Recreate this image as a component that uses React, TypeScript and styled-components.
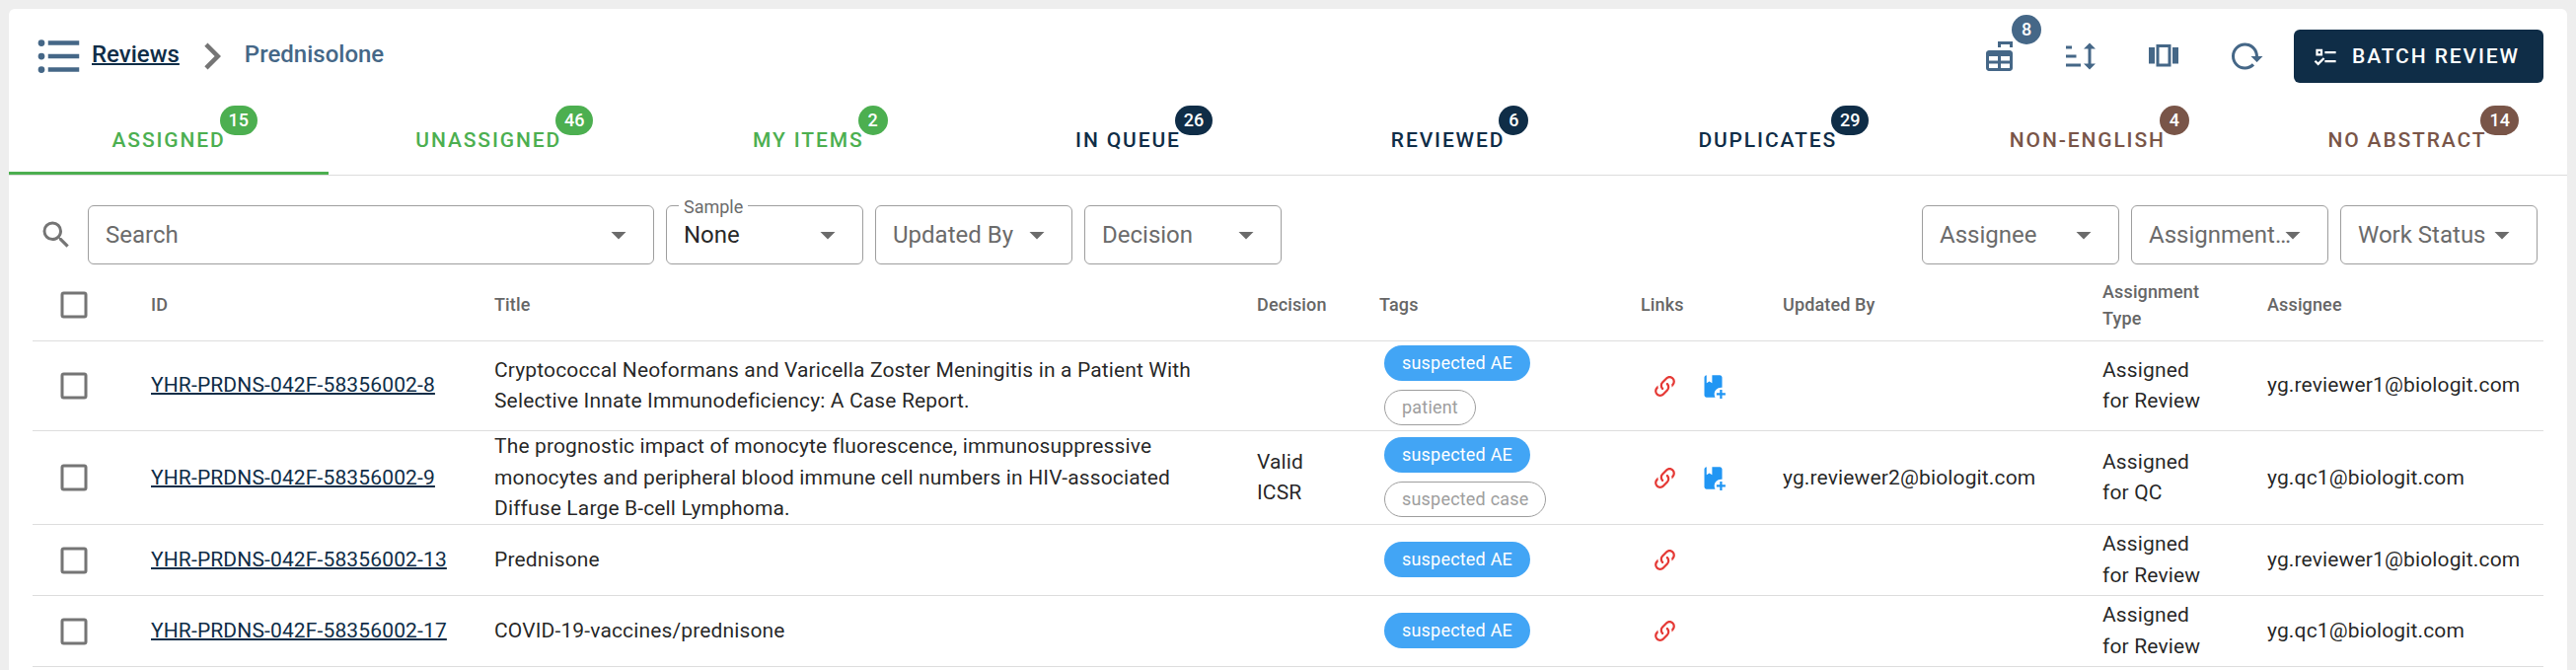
import React from 'react';
import styled, { createGlobalStyle } from 'styled-components';

const Global = createGlobalStyle`
  * { box-sizing: border-box; }
  html, body { margin: 0; height: 679px; overflow: hidden; background: #eeeeee; }
  body { font-family: Roboto, "Liberation Sans", sans-serif; color: rgba(0,0,0,.87); }
`;

const Page = styled.div`
  height: 679px; padding: 9px 9px 0; background: #eeeeee; overflow: hidden;
`;
const Card = styled.main`
  height: 700px; background: #fff; border-radius: 6px; overflow: hidden;
`;
const Header = styled.header`
  height: 96px; display: flex; align-items: center; justify-content: space-between; padding: 0 24px;
`;
const Crumbs = styled.nav`
  display: flex; align-items: center; font-size: 24px; font-weight: 500; color: #456787; line-height: 36px;
`;
const CrumbLink = styled.a`
  color: #0f2d47; text-decoration: underline; text-decoration-thickness: 2px; margin: 0 0 5px 6px;
`;
const Current = styled.span`margin-bottom: 5px;`;
const Icon = styled.svg<{ $size?: number }>`
  width: ${p => p.$size ?? 36}px; height: ${p => p.$size ?? 36}px; fill: currentColor; display: block; flex: none;
`;
const Chevron = styled(Icon)`color: #757575; margin: 0 6px;`;
const Actions = styled.div`display: flex; align-items: center; color: #456787;`;
const ActionIcon = styled.div`
  position: relative; width: 36px; height: 36px; margin-right: 48px;
  &:nth-of-type(1) { margin-right: 45px; }
  &:nth-of-type(4) { margin-right: 30px; }
`;
const Badge = styled.span<{ $color: string }>`
  position: absolute; left: calc(100% - 7px); bottom: calc(100% - 6px); height: 30px; min-width: 30px;
  padding: 6px 9px; border-radius: 15px; background: ${p => p.$color}; color: #fff;
  font-size: 18px; line-height: 18px; font-weight: 500; letter-spacing: 0; text-align: center;
`;
const Batch = styled.button`
  height: 54px; width: 253px; border: 0; border-radius: 6px; background: #0f2d47; color: #fff; padding: 0 0 0 19px;
  display: flex; align-items: center; gap: 13px; white-space: nowrap;
  font: 500 21px Roboto, sans-serif; letter-spacing: 1.9px;
`;
const Tabs = styled.div`
  height: 73px; display: flex; border-bottom: 1px solid #dcdcdc;
`;
const Tab = styled.div<{ $color: string; $active?: boolean }>`
  flex: 1; display: flex; align-items: center; justify-content: center; color: ${p => p.$color};
  font-size: 21px; line-height: 24px; font-weight: 500; letter-spacing: 1.875px; padding-top: 2px;
  box-shadow: ${p => (p.$active ? `inset 0 -3px ${p.$color}` : 'none')};
`;
const TabLabel = styled.span`position: relative; white-space: nowrap;`;
const TabBadge = styled(Badge)`left: calc(100% - 6px); bottom: calc(100% - 7px);`;
const Filters = styled.div`
  height: 96px; display: flex; align-items: center; padding: 24px 30px 0; color: #757575;
`;
const SearchIcon = styled(Icon)`margin-right: 14px;`;
const Select = styled.div<{ $w: number }>`
  position: relative; width: ${p => p.$w}px; height: 60px; border: 1px solid #9e9e9e; border-radius: 6px;
  display: flex; align-items: center; padding: 0 17px 0 17px; margin-right: 12px;
  font-size: 24px; color: #6b6b6b;
  &:last-child { margin-right: 0; }
`;
const SelectText = styled.span<{ $dark?: boolean }>`
  flex: 1; min-width: 0; white-space: nowrap; color: ${p => (p.$dark ? 'rgba(0,0,0,.87)' : 'inherit')};
`;
const FloatLabel = styled.span`
  position: absolute; top: -10px; left: 12px; padding: 0 5px; background: #fff; font-size: 18px; line-height: 22px;
`;
const Arrow = styled(Icon)`color: #6b6b6b;`;
const Spacer = styled.div`flex: 1;`;
const Table = styled.div`margin: 0 24px;`;
const Row = styled.div<{ $h: number }>`
  height: ${p => p.$h}px; display: grid; align-items: center; border-bottom: 1px solid #dddddd;
  grid-template-columns: 120px 348px 773px 124px 265px 144px 324px 167px 1fr;
  font-size: 21px; line-height: 31.5px; letter-spacing: 0.14px;
`;
const HeadRow = styled(Row)`
  padding-bottom: 2px; font-size: 18px; line-height: 27px; font-weight: 500; color: #666;
`;
const Cell = styled.div`white-space: pre;`;
const CheckCell = styled.div`padding-left: 24px; color: #757575;`;
const IdLink = styled.a`color: #0f2d47; text-decoration: underline; text-decoration-thickness: 2px;`;
const Tags = styled.div`
  display: flex; flex-direction: column; align-items: flex-start; gap: 9px; padding: 0 0 1px 5px;
`;
const Tag = styled.span<{ $outline?: boolean }>`
  height: 36px; padding: 0 ${p => (p.$outline ? 17 : 18)}px; border-radius: 18px;
  font-size: 18px; line-height: ${p => (p.$outline ? 34 : 36)}px; letter-spacing: 0.2px;
  background: ${p => (p.$outline ? '#fff' : '#42a5f5')}; color: ${p => (p.$outline ? '#9e9e9e' : '#fff')};
  border: ${p => (p.$outline ? '1px solid #9e9e9e' : '0')};
`;
const Links = styled.div`display: flex; align-items: center; gap: 22px; padding-left: 11px;`;
const LinkGlyph = styled(Icon)`color: #e53935;`;
const BookGlyph = styled(Icon)`color: #2196f3;`;

const CheckIcon = () => (
  <Icon viewBox="0 0 24 24"><path d="M19,3H5C3.89,3 3,3.89 3,5V19A2,2 0 0,0 5,21H19A2,2 0 0,0 21,19V5C21,3.89 20.1,3 19,3M19,5V19H5V5H19Z" /></Icon>
);
const Dropdown = () => <Arrow viewBox="0 0 24 24"><path d="M7,10L12,15L17,10H7Z" /></Arrow>;

const NAVY = '#0f2d47', GREEN = '#4caf50', BROWN = '#795548', SLATE = '#456787';
const tabs = [
  { label: 'ASSIGNED', count: 15, color: GREEN },
  { label: 'UNASSIGNED', count: 46, color: GREEN },
  { label: 'MY ITEMS', count: 2, color: GREEN },
  { label: 'IN QUEUE', count: 26, color: NAVY },
  { label: 'REVIEWED', count: 6, color: NAVY },
  { label: 'DUPLICATES', count: 29, color: NAVY },
  { label: 'NON-ENGLISH', count: 4, color: BROWN },
  { label: 'NO ABSTRACT', count: 14, color: BROWN },
];

const rows = [
  { h: 91, id: '8', title: 'Cryptococcal Neoformans and Varicella Zoster Meningitis in a Patient With\nSelective Innate Immunodeficiency: A Case Report.', decision: '', extra: 'patient', book: true, by: '', type: 'Assigned\nfor Review', who: 'yg.reviewer1@biologit.com' },
  { h: 95, id: '9', title: 'The prognostic impact of monocyte fluorescence, immunosuppressive\nmonocytes and peripheral blood immune cell numbers in HIV-associated\nDiffuse Large B-cell Lymphoma.', decision: 'Valid\nICSR', extra: 'suspected case', book: true, by: 'yg.reviewer2@biologit.com', type: 'Assigned\nfor QC', who: 'yg.qc1@biologit.com' },
  { h: 72, id: '13', title: 'Prednisone', decision: '', extra: '', book: false, by: '', type: 'Assigned\nfor Review', who: 'yg.reviewer1@biologit.com' },
  { h: 72, id: '17', title: 'COVID-19-vaccines/prednisone', decision: '', extra: '', book: false, by: '', type: 'Assigned\nfor Review', who: 'yg.qc1@biologit.com' },
];

export default function App() {
  return (
    <Page>
      <Global />
      <Card>
        <Header>
          <Crumbs>
            <Icon $size={54} viewBox="0 0 24 24"><path d="M7,5H21V7H7V5M7,13V11H21V13H7M4,4.5A1.5,1.5 0 0,1 5.5,6A1.5,1.5 0 0,1 4,7.5A1.5,1.5 0 0,1 2.5,6A1.5,1.5 0 0,1 4,4.5M4,10.5A1.5,1.5 0 0,1 5.5,12A1.5,1.5 0 0,1 4,13.5A1.5,1.5 0 0,1 2.5,12A1.5,1.5 0 0,1 4,10.5M7,19V17H21V19H7M4,16.5A1.5,1.5 0 0,1 5.5,18A1.5,1.5 0 0,1 4,19.5A1.5,1.5 0 0,1 2.5,18A1.5,1.5 0 0,1 4,16.5Z" /></Icon>
            <CrumbLink>Reviews</CrumbLink>
            <Chevron $size={54} viewBox="0 0 24 24"><path d="M8.59,16.58L13.17,12L8.59,7.41L10,6L16,12L10,18L8.59,16.58Z" /></Chevron>
            <Current>Prednisolone</Current>
          </Crumbs>
          <Actions>
            <ActionIcon>
              <Icon viewBox="0 0 24 24"><path d="M18 8H4C2.9 8 2 8.9 2 10V20C2 21.1 2.9 22 4 22H18C19.1 22 20 21.1 20 20V10C20 8.9 19.1 8 18 8M10 20H4V17H10V20M10 15H4V12H10V15M18 20H12V17H18V20M18 15H12V12H18V15M10 2V6H12V4H18V6H20V2Z" /></Icon>
              <Badge $color={SLATE}>8</Badge>
            </ActionIcon>
            <ActionIcon><Icon viewBox="0 0 24 24"><path d="M18 21L14 17H17V7H14L18 3L22 7H19V17H22M2 19V17H12V19M2 13V11H9V13M2 7V5H6V7H2Z" /></Icon></ActionIcon>
            <ActionIcon><Icon viewBox="0 0 24 24"><path d="M18,6V17H22V6M2,17H6V6H2M7,19H17V4H7M9,6H15V17H9V6Z" /></Icon></ActionIcon>
            <ActionIcon><Icon viewBox="0 0 24 24"><path d="M2 12C2 16.97 6.03 21 11 21C13.39 21 15.68 20.06 17.4 18.4L15.9 16.9C14.63 18.25 12.86 19 11 19C4.76 19 1.64 11.46 6.05 7.05C10.46 2.64 18 5.77 18 12H15L19 16H19.1L23 12H20C20 7.03 15.97 3 11 3C6.03 3 2 7.03 2 12Z" /></Icon></ActionIcon>
            <Batch>
              <Icon $size={27} viewBox="0 0 24 24"><path d="M3,5H9V11H3V5M5,7V9H7V7H5M11,7H21V9H11V7M11,15H21V17H11V15M5,20L1.5,16.5L2.91,15.09L5,17.17L9.59,12.59L11,14L5,20Z" /></Icon>
              BATCH REVIEW
            </Batch>
          </Actions>
        </Header>
        <Tabs>
          {tabs.map((t, i) => (
            <Tab key={t.label} $color={t.color} $active={i === 0}>
              <TabLabel>{t.label}<TabBadge $color={t.color}>{t.count}</TabBadge></TabLabel>
            </Tab>
          ))}
        </Tabs>
        <Filters>
          <SearchIcon viewBox="0 0 24 24"><path d="M9.5,3A6.5,6.5 0 0,1 16,9.5C16,11.11 15.41,12.59 14.44,13.73L14.71,14H15.5L20.5,19L19,20.5L14,15.5V14.71L13.73,14.44C12.59,15.41 11.11,16 9.5,16A6.5,6.5 0 0,1 3,9.5A6.5,6.5 0 0,1 9.5,3M9.5,5C7,5 5,7 5,9.5C5,12 7,14 9.5,14C12,14 14,12 14,9.5C14,7 12,5 9.5,5Z" /></SearchIcon>
          <Select $w={574}><SelectText>Search</SelectText><Dropdown /></Select>
          <Select $w={200}><FloatLabel>Sample</FloatLabel><SelectText $dark>None</SelectText><Dropdown /></Select>
          <Select $w={200}><SelectText>Updated By</SelectText><Dropdown /></Select>
          <Select $w={200}><SelectText>Decision</SelectText><Dropdown /></Select>
          <Spacer />
          <Select $w={200}><SelectText>Assignee</SelectText><Dropdown /></Select>
          <Select $w={200}><SelectText>Assignment…</SelectText><Dropdown /></Select>
          <Select $w={200}><SelectText>Work Status</SelectText><Dropdown /></Select>
        </Filters>
        <Table>
          <HeadRow $h={72}>
            <CheckCell><CheckIcon /></CheckCell>
            <Cell>ID</Cell><Cell>Title</Cell><Cell>Decision</Cell><Cell>Tags</Cell><Cell>Links</Cell>
            <Cell>Updated By</Cell><Cell>{'Assignment\nType'}</Cell><Cell>Assignee</Cell>
          </HeadRow>
          {rows.map(r => (
            <Row key={r.id} $h={r.h}>
              <CheckCell><CheckIcon /></CheckCell>
              <Cell><IdLink>YHR-PRDNS-042F-58356002-{r.id}</IdLink></Cell>
              <Cell>{r.title}</Cell>
              <Cell>{r.decision}</Cell>
              <Tags><Tag>suspected AE</Tag>{r.extra && <Tag $outline>{r.extra}</Tag>}</Tags>
              <Links>
                <LinkGlyph $size={27} viewBox="0 0 24 24"><path d="M10.59,13.41C11,13.8 11,14.44 10.59,14.83C10.2,15.22 9.56,15.22 9.17,14.83C7.22,12.88 7.22,9.71 9.17,7.76L12.71,4.22C14.66,2.27 17.83,2.27 19.78,4.22C21.73,6.17 21.73,9.34 19.78,11.29L18.29,12.78C18.3,11.96 18.17,11.14 17.89,10.36L18.36,9.88C19.54,8.71 19.54,6.81 18.36,5.64C17.19,4.46 15.29,4.46 14.12,5.64L10.59,9.17C9.41,10.34 9.41,12.24 10.59,13.41M13.41,9.17C13.8,8.78 14.44,8.78 14.83,9.17C16.78,11.12 16.78,14.29 14.83,16.24L11.29,19.78C9.34,21.73 6.17,21.73 4.22,19.78C2.27,17.83 2.27,14.66 4.22,12.71L5.71,11.22C5.7,12.04 5.83,12.86 6.11,13.65L5.64,14.12C4.46,15.29 4.46,17.19 5.64,18.36C6.81,19.54 8.71,19.54 9.88,18.36L13.41,14.83C14.59,13.66 14.59,11.76 13.41,10.59C13,10.2 13,9.56 13.41,9.17Z" /></LinkGlyph>
                {r.book && <BookGlyph $size={27} viewBox="0 0 24 24"><path d="M13 19C13 15.69 15.69 13 19 13C19.34 13 19.67 13.03 20 13.08V4C20 2.9 19.1 2 18 2H11V9L8.5 7.5L6 9V2C4.9 2 4 2.9 4 4V20C4 21.1 4.9 22 6 22H13.81C13.3 21.12 13 20.1 13 19M20 18V15H18V18H15V20H18V23H20V20H23V18H20Z" /></BookGlyph>}
              </Links>
              <Cell>{r.by}</Cell>
              <Cell>{r.type}</Cell>
              <Cell>{r.who}</Cell>
            </Row>
          ))}
        </Table>
      </Card>
    </Page>
  );
}
